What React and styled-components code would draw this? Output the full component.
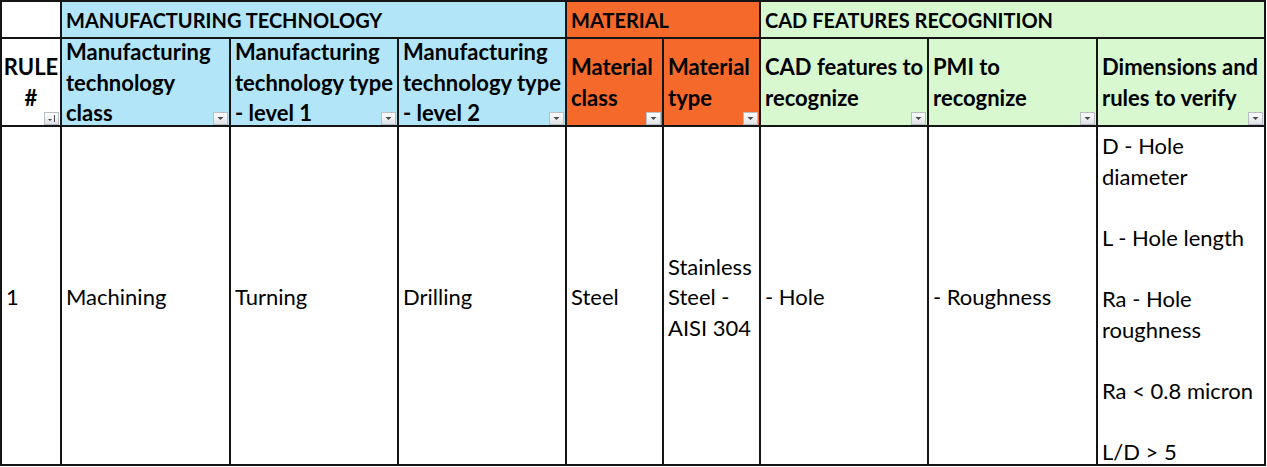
import React from 'react'
import styled, { createGlobalStyle } from 'styled-components'

const GlobalStyle = createGlobalStyle`
    html, body {
        margin: 0;
        padding: 0;
        background: #ffffff;
    }
    body {
        font-family: Lato, "Open Sans", sans-serif;
        color: #000;
    }
`;

const tones = {
    white: '#ffffff',
    blue: '#b1e5f7',
    orange: '#f5692b',
    green: '#d8f8d0'
};

const Sheet = styled.div`
    display: grid;
    grid-template-columns: 58px 167px 166px 166px 95px 95px 166px 167px 166px;
    grid-template-rows: 35px 86px 337px;
    gap: 2px;
    padding: 2px;
    width: 1266px;
    box-sizing: border-box;
    background: #151515;
`;

const Cell = styled.div`
    position: relative;
    overflow: hidden;
    background: ${p => tones[p.$tone || 'white']};
    grid-column: ${p => p.$span ? `span ${p.$span}` : 'auto'};
    display: flex;
    flex-direction: column;
    justify-content: center;
    align-items: ${p => p.$center ? 'center' : 'flex-start'};
    padding: 0 0 0 4px;
    font-size: 22px;
    line-height: 30.6px;
    white-space: nowrap;
`;

const GroupCell = styled(Cell)`
    font-weight: 700;
    font-size: 20px;
    padding-left: 4px;
    padding-top: 1px;
`;

const HeadCell = styled(Cell)`
    font-weight: 700;
    padding-top: 2px;
    padding-left: ${p => p.$center ? '0' : '4px'};
`;

const BodyCell = styled(Cell)`
    padding-left: 4px;
    padding-top: 4px;
`;

const ListCell = styled(Cell)`
    justify-content: flex-start;
    padding-top: 4px;
`;

const Line = styled.span`
    display: block;
    min-height: 30.6px;
`;

const FilterButton = styled.span`
    position: absolute;
    right: 1px;
    bottom: 0;
    width: 15px;
    height: 13px;
    box-sizing: border-box;
    border: 1px solid #b9bec4;
    background: linear-gradient(#ffffff, #dfe2e6);
    display: flex;
    align-items: center;
    justify-content: center;
`;

function Filter({ sorted }) {
    return (
        <FilterButton>
            <svg width="11" height="9" viewBox="0 0 11 9">
                {sorted ? (
                    <>
                        <path d="M2 5 L6 5 L4 7 Z" fill="#4a4a4a" />
                        <rect x="8" y="1" width="1" height="7" fill="#4a4a4a" />
                    </>
                ) : (
                    <path d="M2.5 3 L8.5 3 L5.5 6 Z" fill="#4a4a4a" />
                )}
            </svg>
        </FilterButton>
    )
}

function Lines({ items }) {
    return items.map((t, i) => <Line key={i}>{t || '\u00A0'}</Line>)
}

const headers = [
    { tone: 'blue', lines: ['Manufacturing', 'technology', 'class'] },
    { tone: 'blue', lines: ['Manufacturing', 'technology type', '- level 1'] },
    { tone: 'blue', lines: ['Manufacturing', 'technology type', '- level 2'] },
    { tone: 'orange', lines: ['Material', 'class'] },
    { tone: 'orange', lines: ['Material', 'type'] },
    { tone: 'green', lines: ['CAD features to', 'recognize'] },
    { tone: 'green', lines: ['PMI to', 'recognize'] },
    { tone: 'green', lines: ['Dimensions and', 'rules to verify'] }
];

const row = [
    ['Machining'],
    ['Turning'],
    ['Drilling'],
    ['Steel'],
    ['Stainless', 'Steel -', 'AISI 304'],
    ['- Hole'],
    ['- Roughness']
];

const rules = [
    'D - Hole', 'diameter', '', 'L - Hole length', '', 'Ra - Hole',
    'roughness', '', 'Ra < 0.8 micron', '', 'L/D > 5'
];

export default function App() {
    return (
        <>
            <GlobalStyle />
            <Sheet>
                <GroupCell />
                <GroupCell $tone="blue" $span={3}>MANUFACTURING TECHNOLOGY</GroupCell>
                <GroupCell $tone="orange" $span={2}>MATERIAL</GroupCell>
                <GroupCell $tone="green" $span={3}>CAD FEATURES RECOGNITION</GroupCell>

                <HeadCell $center>
                    <Lines items={['RULE', '#']} />
                    <Filter sorted />
                </HeadCell>
                {headers.map((h, i) => (
                    <HeadCell key={i} $tone={h.tone}>
                        <Lines items={h.lines} />
                        <Filter />
                    </HeadCell>
                ))}

                <BodyCell><Line>1</Line></BodyCell>
                {row.map((r, i) => (
                    <BodyCell key={i}><Lines items={r} /></BodyCell>
                ))}
                <ListCell><Lines items={rules} /></ListCell>
            </Sheet>
        </>
    )
}
